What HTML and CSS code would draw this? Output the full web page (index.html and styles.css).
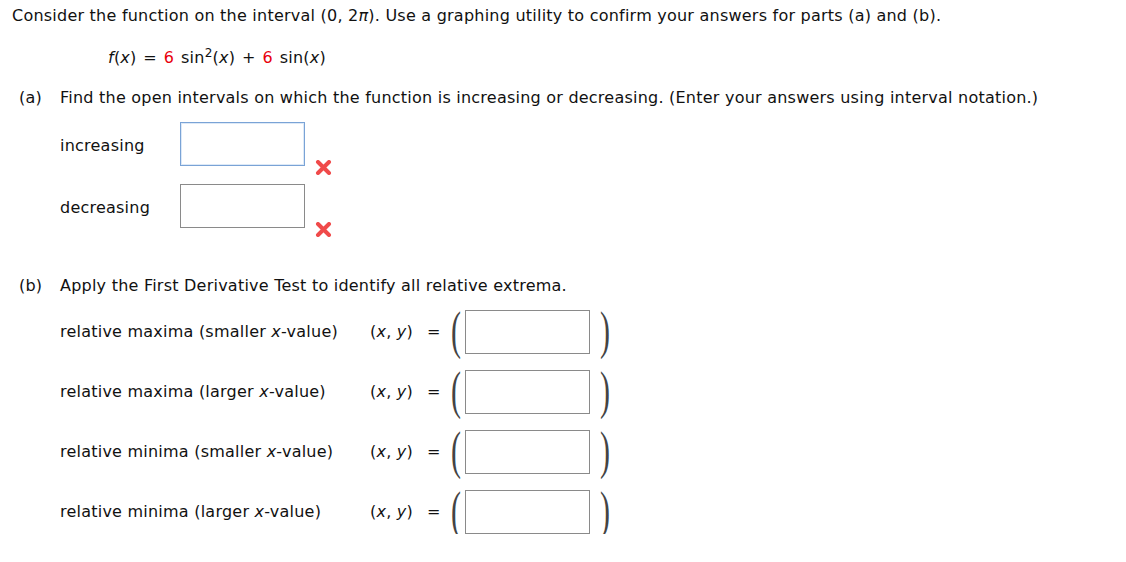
FILE: index.html
```html
<!DOCTYPE html>
<html>
<head>
<meta charset="utf-8">
<link rel="stylesheet" href="styles.css">
</head>
<body>
<div class="page">
  <p class="intro">Consider the function on the interval (0, 2<i class="pi">π</i>). Use a graphing utility to confirm your answers for parts (a) and (b).</p>
  <p class="formula"><i>f</i>(<i>x</i>) = <span class="red">6</span> sin<sup>2</sup>(<i>x</i>) + <span class="red">6</span> sin(<i>x</i>)</p>

  <div class="part part-a">
    <div class="part-head"><span class="tag">(a)</span><span>Find the open intervals on which the function is increasing or decreasing. (Enter your answers using interval notation.)</span></div>
    <div class="arow">
      <span class="alabel">increasing</span>
      <span class="box box-focus"></span>
      <span class="mark">
        <svg width="17" height="15" viewBox="0 0 17 15"><path d="M3 2 L14 13 M14 2 L3 13" stroke="#f04a4a" stroke-width="4" stroke-linecap="round"/></svg>
      </span>
    </div>
    <div class="arow">
      <span class="alabel">decreasing</span>
      <span class="box"></span>
      <span class="mark">
        <svg width="17" height="15" viewBox="0 0 17 15"><path d="M3 2 L14 13 M14 2 L3 13" stroke="#f04a4a" stroke-width="4" stroke-linecap="round"/></svg>
      </span>
    </div>
  </div>

  <div class="part part-b">
    <div class="part-head"><span class="tag">(b)</span><span>Apply the First Derivative Test to identify all relative extrema.</span></div>
    <div class="brow">
      <span class="blabel">relative maxima (smaller <i>x</i>-value)</span>
      <span class="xy">(<i>x</i>, <i>y</i>)</span><span class="eq">=</span>
      <span class="paren">(</span><span class="box bbox"></span><span class="paren close">)</span>
    </div>
    <div class="brow">
      <span class="blabel">relative maxima (larger <i>x</i>-value)</span>
      <span class="xy">(<i>x</i>, <i>y</i>)</span><span class="eq">=</span>
      <span class="paren">(</span><span class="box bbox"></span><span class="paren close">)</span>
    </div>
    <div class="brow">
      <span class="blabel">relative minima (smaller <i>x</i>-value)</span>
      <span class="xy">(<i>x</i>, <i>y</i>)</span><span class="eq">=</span>
      <span class="paren">(</span><span class="box bbox"></span><span class="paren close">)</span>
    </div>
    <div class="brow">
      <span class="blabel">relative minima (larger <i>x</i>-value)</span>
      <span class="xy">(<i>x</i>, <i>y</i>)</span><span class="eq">=</span>
      <span class="paren">(</span><span class="box bbox"></span><span class="paren close">)</span>
    </div>
  </div>
</div>
</body>
</html>
```

FILE: styles.css
```css
body {
  margin: 0;
  background: #fff;
  color: #111;
  font-family: "DejaVu Sans", Verdana, sans-serif;
  font-size: 16px;
  line-height: 20px;
  letter-spacing: 0.23px;
}
.page {
  padding: 6px 0 0 12px;
}
p { margin: 0; }
.intro { height: 20px; white-space: nowrap; }
.formula {
  margin-top: 22px;
  padding-left: 96px;
  height: 20px;
  word-spacing: 1.5px;
}
.formula sup {
  font-size: 12px;
  line-height: 0;
  vertical-align: 6px;
}
.red { color: #e8000b; }
.part-a { margin-top: 20px; }
.part-b { margin-top: 48px; }
.part-head {
  display: flex;
  height: 20px;
  white-space: nowrap;
}
.tag {
  width: 41px;
  padding-left: 7px;
}
.arow {
  display: flex;
  align-items: center;
  margin-top: 14px;
  padding-left: 48px;
  height: 44px;
}
.arow + .arow { margin-top: 18px; }
.alabel {
  width: 120px;
  margin-top: 3px;
}
.box {
  display: block;
  box-sizing: border-box;
  width: 125px;
  height: 44px;
  border: 1px solid #8a8a8a;
  background: #fff;
}
.box-focus {
  border: 1px solid #7aa3d6;
  box-shadow: inset 0 0 0 1px #dde9f7;
}
.mark {
  align-self: flex-end;
  margin-left: 10px;
  margin-bottom: -9px;
  height: 15px;
}
.mark svg { display: block; }
.brow {
  display: flex;
  align-items: center;
  margin-top: 14px;
  padding-left: 48px;
  height: 44px;
}
.brow + .brow { margin-top: 16px; }
.blabel { width: 310px; }
.xy { width: 57px; }
.eq { width: 20px; }
.paren {
  display: inline-block;
  font-family: "Liberation Serif", serif;
  font-size: 30px;
  color: #444;
  transform: scaleY(1.75);
  width: 18px;
  text-align: center;
  line-height: 30px;
  letter-spacing: 0;
  margin-top: -4px;
}
.paren.close { margin-left: 6px; }
```
